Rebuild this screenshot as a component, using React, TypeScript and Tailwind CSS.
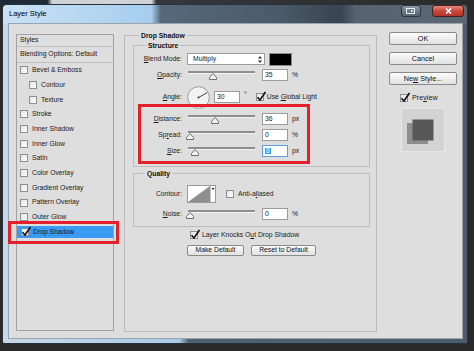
import React from "react";

const font = "font-['Liberation_Sans',Arial,sans-serif]";

function Chk({ checked = false }: { checked?: boolean }) {
  return (
    <span className="relative block w-[8px] h-[8px] shrink-0 border border-[#8f8f8f] bg-gradient-to-br from-[#e4e4e4] to-white">
      {checked && (
        <svg className="absolute -left-[1px] -top-[3px]" width="11" height="11" viewBox="0 0 11 11">
          <path d="M1.5 6.2 L4 9 L9.5 1" fill="none" stroke="#111" strokeWidth="1.7" />
        </svg>
      )}
    </span>
  );
}

function Slider({ pos }: { pos: number }) {
  return (
    <div className="relative w-[67px] h-[12px] shrink-0">
      <div className="mt-[3px] h-[2px] bg-[#8e8e8e] shadow-[0_1px_0_#f4f4f4]" />
      {/* thumb */}
      <svg className="absolute top-[2px]" style={{ left: pos - 3.5 }} width="8" height="7" viewBox="0 0 8 7">
        <path d="M4 0.5 L7.5 4.5 L7.5 6.5 L0.5 6.5 L0.5 4.5 Z" fill="#f2f2f2" stroke="#6f6f6f" strokeWidth="1" />
      </svg>
    </div>
  );
}

function Num({ v, focus = false }: { v: string; focus?: boolean }) {
  return (
    <div
      className={`w-[26px] h-[12px] shrink-0 bg-white border pl-[2px] flex items-center leading-none ${
        focus ? "border-[#5a9fdc]" : "border-[#9c9c9c]"
      }`}
    >
      {focus ? <span className="bg-[#3399ff] text-white px-[1px]">{v}</span> : v}
    </div>
  );
}

function Label({ children }: { children: React.ReactNode }) {
  return <div className="w-[48px] shrink-0 text-right leading-none">{children}</div>;
}

function SliderRow({
  label,
  pos,
  value,
  unit,
  focus,
}: {
  label: React.ReactNode;
  pos: number;
  value: string;
  unit: string;
  focus?: boolean;
}) {
  return (
    <div className="h-[14px] flex items-center">
      <Label>{label}</Label>
      <div className="ml-[6px]">
        <Slider pos={pos} />
      </div>
      <div className="ml-[7px]">
        <Num v={value} focus={focus} />
      </div>
      <span className="ml-[4px] leading-none">{unit}</span>
    </div>
  );
}

function Btn({ children, className = "" }: { children: React.ReactNode; className?: string }) {
  return (
    <div
      className={`flex items-center justify-center leading-none border border-[#8a8a8a] rounded-[2px] bg-gradient-to-b from-[#fbfbfb] to-[#e1e1e1] text-[#111] ${className}`}
    >
      {children}
    </div>
  );
}

function Legend({ children, ml }: { children: React.ReactNode; ml: string }) {
  return <span className={`block w-fit -mt-[5px] h-[9px] leading-[9px] px-[2px] bg-[#dedede] font-bold text-[#111] ${ml}`}>{children}</span>;
}

const styleItems: { label: string; indent?: boolean }[] = [
  { label: "Bevel & Emboss" },
  { label: "Contour", indent: true },
  { label: "Texture", indent: true },
  { label: "Stroke" },
  { label: "Inner Shadow" },
  { label: "Inner Glow" },
  { label: "Satin" },
  { label: "Color Overlay" },
  { label: "Gradient Overlay" },
  { label: "Pattern Overlay" },
  { label: "Outer Glow" },
];

export default function App() {
  return (
    <div className={`w-[474px] h-[351px] overflow-hidden bg-[#2a2a2a] ${font} text-[6.8px] text-[#1a1a1a]`}>
      <div className="h-[4px] bg-[linear-gradient(90deg,#1e2a36_0%,#1e2a36_10%,#cfd3d6_11%,#cfd3d6_32%,#34383c_33%,#2a2a2a_100%)]" />
      <div className="pl-[2px]">
        {/* window */}
        <div className="w-[466px] h-[340px] rounded-t-[5px] rounded-b-[2px] border border-[#26313b] bg-[linear-gradient(90deg,#c8d9e8_0%,#a9cbe8_38%,#50606d_40%,#4d5c69_100%)] flex flex-col">
          {/* title bar */}
          <div className="h-[18px] shrink-0 rounded-t-[4px] flex items-center pl-[6px] pr-[3px] bg-[linear-gradient(90deg,#c9e1f4_0%,#b4d6f1_20%,#a6cdee_32%,#56687a_34%,#4b5a68_60%,#3b4651_71%,#3b4651_73%,#56636f_76%,#5b6874_100%)]">
            <span className="text-[7.5px] text-black leading-none">Layer Style</span>
            <div className="ml-auto self-start flex gap-[11px]">
              <div className="w-[20px] h-[12px] rounded-[3px] border border-[#2c3741] bg-gradient-to-b from-[#8b98a4] to-[#56636f] flex items-center justify-center">
                <svg width="10" height="6" viewBox="0 0 10 6">
                  <rect x="0.5" y="0.5" width="8" height="5" fill="none" stroke="#e8eef3" strokeWidth="1" />
                  <path d="M5 2 L8 3 L5 4 Z" fill="#e8eef3" />
                </svg>
              </div>
              <div className="w-[32px] h-[12px] rounded-[3px] border border-[#4a1f1a] bg-gradient-to-b from-[#e0897d] via-[#c8473a] to-[#b7342a] flex items-center justify-center">
                <svg width="7" height="6" viewBox="0 0 7 6">
                  <path d="M1 0.5 L6 5.5 M6 0.5 L1 5.5" stroke="#fff" strokeWidth="1.6" />
                </svg>
              </div>
            </div>
          </div>

          {/* client area */}
          <div className="ml-[5px] w-[455px] h-[316px] bg-[#dedede] border border-[#98a5b1] flex items-start pl-[7px]">
            {/* styles list */}
            <div className="mt-[10px] w-[98px] h-[297px] shrink-0 border border-[#a2a2a2] flex flex-col">
              <div className="h-[12px] shrink-0 border-b border-[#c2c2c2] pl-[3px] flex items-center">Styles</div>
              <div className="h-[16px] shrink-0 border-b border-[#c2c2c2] pl-[3px] flex items-center">Blending Options: Default</div>
              {styleItems.map((it) => (
                <div
                  key={it.label}
                  className={`h-[14.69px] shrink-0 flex items-center gap-[4px] ${it.indent ? "pl-[12px]" : "pl-[3px]"}`}
                >
                  <Chk />
                  <span>{it.label}</span>
                </div>
              ))}
              <div className="relative h-[14.69px] shrink-0 py-[1px]">
                <div className="h-full bg-[#3a9bf4] flex items-center gap-[4px] pl-[4px] text-[#0d1a33]">
                  <Chk checked />
                  <span>Drop Shadow</span>
                </div>
                <div className="absolute -left-[9px] -right-[6px] -top-[4px] -bottom-[5px] border-[3px] border-[#e3202b]" />
              </div>
            </div>

            {/* settings panel */}
            <div className="ml-[10px] mt-[11px] w-[253px] h-[297px] shrink-0 border border-[#bcbcbc] flex flex-col">
              <Legend ml="ml-[14px]">Drop Shadow</Legend>

              {/* Structure */}
              <div className="mt-[5px] ml-[8px] mr-[6px] border border-[#bcbcbc] pb-[8px]">
                <Legend ml="ml-[12px]">Structure</Legend>
                <div className="mt-[2px] h-[14px] flex items-center">
                  <Label>
                    <span className="underline">B</span>lend Mode:
                  </Label>
                  <div className="ml-[5px] w-[78px] h-[12px] bg-white border border-[#9c9c9c] flex items-center justify-between pl-[5px] pr-[2px] leading-none">
                    <span>Multiply</span>
                    <svg width="4" height="7" viewBox="0 0 4 7">
                      <path d="M2 0 L4 2.5 L0 2.5 Z M2 7 L4 4.5 L0 4.5 Z" fill="#333" />
                    </svg>
                  </div>
                  <div className="ml-[4px] w-[23px] h-[13px] bg-black border border-[#8a8a8a]" />
                </div>
                <div className="mt-[2px]">
                  <SliderRow label={<><span className="underline">O</span>pacity:</>} pos={24} value="35" unit="%" />
                </div>
                <div className="mt-[3px] h-[24px] flex items-center">
                  <Label>
                    <span className="underline">A</span>ngle:
                  </Label>
                  <svg className="ml-[5px] shrink-0" width="23" height="23" viewBox="0 0 23 23">
                    <circle cx="11.5" cy="11.5" r="10.8" fill="#f3f3f3" stroke="#9a9a9a" strokeWidth="1" />
                    <path d="M11.5 11.5 L20.3 6.6" stroke="#444" strokeWidth="1" />
                    <circle cx="11.5" cy="11.5" r="1" fill="#333" />
                  </svg>
                  <div className="ml-[4px]">
                    <Num v="30" />
                  </div>
                  <span className="ml-[4px] leading-none -mt-[3px]">°</span>
                  <div className="ml-[9px]">
                    <Chk checked />
                  </div>
                  <span className="ml-[3px] leading-none">
                    Use <span className="underline">G</span>lobal Light
                  </span>
                </div>
                <div className="relative">
                  <div className="mt-[3px]">
                    <SliderRow label={<><span className="underline">D</span>istance:</>} pos={26} value="36" unit="px" />
                  </div>
                  <div className="mt-[2px]">
                    <SliderRow label={<>Sp<span className="underline">r</span>ead:</>} pos={1} value="0" unit="%" />
                  </div>
                  <div className="mt-[2px]">
                    <SliderRow label={<><span className="underline">S</span>ize:</>} pos={6} value="8" unit="px" focus />
                  </div>
                  <div className="absolute left-[4px] w-[172px] -top-[8px] -bottom-[6px] border-[3px] border-[#e3202b]" />
                </div>
              </div>

              {/* Quality */}
              <div className="mt-[6px] ml-[8px] mr-[6px] border border-[#bcbcbc] pb-[6px]">
                <Legend ml="ml-[11px]">Quality</Legend>
                <div className="mt-[7px] h-[18px] flex items-center">
                  <Label>Contour:</Label>
                  <svg className="ml-[5px] shrink-0" width="29" height="18" viewBox="0 0 29 18">
                    <rect x="0.5" y="0.5" width="28" height="17" fill="#fff" stroke="#9a9a9a" />
                    <path d="M1 17 L23 1 L23 17 Z" fill="#8e8e8e" />
                    <path d="M23.5 1 L23.5 17" stroke="#c8c8c8" />
                    <path d="M24.5 3 L27.5 3 L26 5 Z" fill="#222" />
                  </svg>
                  <div className="ml-[10px]">
                    <Chk />
                  </div>
                  <span className="ml-[4px] leading-none">
                    Anti-a<span className="underline">l</span>iased
                  </span>
                </div>
                <div className="mt-[5px] h-[12px] flex items-center">
                  <Label>
                    <span className="underline">N</span>oise:
                  </Label>
                  <div className="ml-[6px]">
                    <Slider pos={1} />
                  </div>
                  <div className="ml-[7px]">
                    <Num v="0" />
                  </div>
                  <span className="ml-[4px] leading-none">%</span>
                </div>
              </div>

              <div className="mt-[2px] h-[12px] pl-[65px] flex items-center">
                <Chk checked />
                <span className="ml-[4px] leading-none">
                  Layer Knocks O<span className="underline">u</span>t Drop Shadow
                </span>
              </div>
              <div className="mt-[4px] pl-[62px] flex gap-[7px]">
                <Btn className="w-[57px] h-[11px]">Make Default</Btn>
                <Btn className="w-[65px] h-[11px]">Reset to Default</Btn>
              </div>
            </div>

            {/* right column */}
            <div className="ml-[12px] mt-[8px] w-[68px] shrink-0 flex flex-col">
              <Btn className="h-[13px] text-[7.2px]">OK</Btn>
              <Btn className="mt-[7px] h-[13px] text-[7.2px]">Cancel</Btn>
              <Btn className="mt-[7px] h-[13px] text-[7.2px]">
                <span>
                  Ne<span className="underline">w</span> Style...
                </span>
              </Btn>
              <div className="mt-[8px] h-[10px] pl-[11px] flex items-center">
                <Chk checked />
                <span className="ml-[4px] leading-none text-[7.2px]">
                  Pre<span className="underline">v</span>iew
                </span>
              </div>
              <div className="mt-[5px] ml-[12px] w-[44px] h-[44px] bg-[#d3d3d3] border border-[#e6e6e6]">
                <svg width="42" height="42" viewBox="0 0 42 42">
                  <rect x="5" y="14" width="21" height="21" fill="#8e8e8e" />
                  <rect x="10.5" y="10.5" width="21" height="21" fill="#585858" />
                </svg>
              </div>
            </div>
          </div>
        </div>
      </div>
    </div>
  );
}
